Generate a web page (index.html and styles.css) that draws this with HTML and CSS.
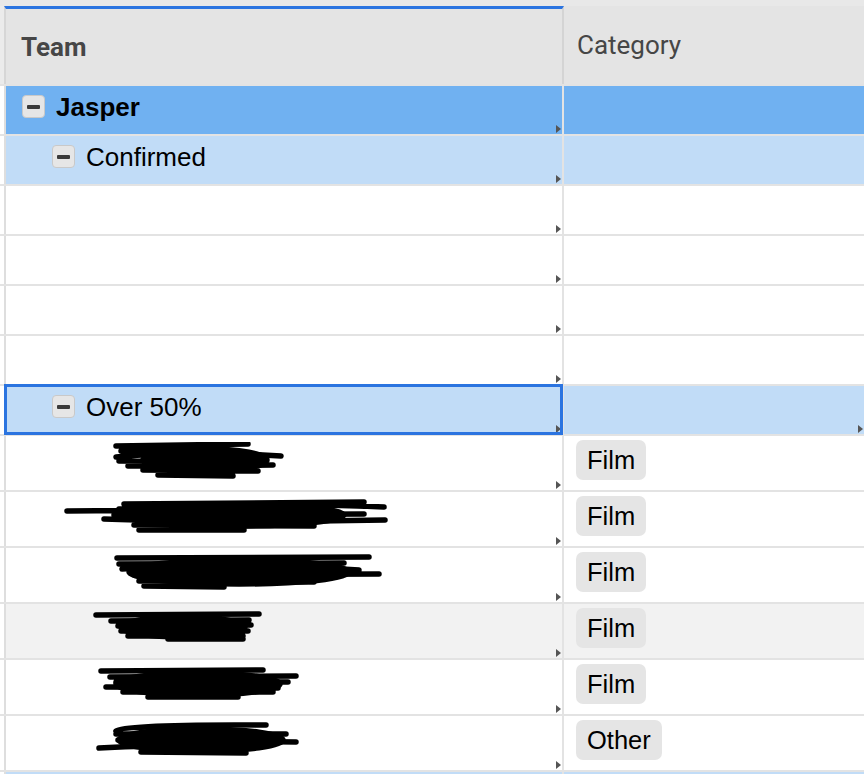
FILE: index.html
```html
<!DOCTYPE html>
<html>
<head>
<meta charset="utf-8">
<link rel="stylesheet" href="styles.css">
</head>
<body>
<div class="table">
  <div class="topband"></div>
  <div class="row head">
    <div class="gut"></div>
    <div class="cell team sorted"><span class="htext bold">Team</span></div>
    <div class="cell cat"><span class="htext">Category</span></div>
  </div>

  <div class="row group g1">
    <div class="gut"></div>
    <div class="cell team tri"><span class="toggle"><i></i></span><span class="gname strong">Jasper</span></div>
    <div class="cell cat"></div>
  </div>
  <div class="row group g2">
    <div class="gut"></div>
    <div class="cell team tri lvl2"><span class="toggle"><i></i></span><span class="gname">Confirmed</span></div>
    <div class="cell cat"></div>
  </div>
  <div class="row group">
    <div class="gut"></div>
    <div class="cell team tri"></div>
    <div class="cell cat"></div>
  </div>
  <div class="row group">
    <div class="gut"></div>
    <div class="cell team tri"></div>
    <div class="cell cat"></div>
  </div>
  <div class="row group">
    <div class="gut"></div>
    <div class="cell team tri"></div>
    <div class="cell cat"></div>
  </div>
  <div class="row group">
    <div class="gut"></div>
    <div class="cell team tri"></div>
    <div class="cell cat"></div>
  </div>
  <div class="row group g2">
    <div class="gut"></div>
    <div class="cell team tri lvl2 selected"><span class="toggle"><i></i></span><span class="gname">Over 50%</span></div>
    <div class="cell cat tri"></div>
  </div>

  <div class="row data">
    <div class="gut"></div>
    <div class="cell team tri">
      <svg class="scr s1" width="172" height="38" viewBox="0 0 172 38"><ellipse cx="92" cy="18" rx="62" ry="11"/><path d="M3 4 L135 2 M8 9 L110 8 M3 15 Q80 8 168 14 M6 19 L150 20 M15 24 L160 23 M30 28 L145 29 M45 33 L120 34"/></svg>
    </div>
    <div class="cell cat"><span class="chip">Film</span></div>
  </div>
  <div class="row data">
    <div class="gut"></div>
    <div class="cell team tri">
      <svg class="scr s2" width="324" height="34" viewBox="0 0 324 34"><ellipse cx="170" cy="16" rx="110" ry="11"/><path d="M3 12 L120 11 M60 5 L300 3 M55 10 Q200 2 320 8 M50 16 L300 15 M40 20 Q150 24 321 21 M70 26 L250 27 M75 31 L180 31"/></svg>
    </div>
    <div class="cell cat"><span class="chip">Film</span></div>
  </div>
  <div class="row data">
    <div class="gut"></div>
    <div class="cell team tri">
      <svg class="scr s3" width="268" height="37" viewBox="0 0 268 37"><ellipse cx="125" cy="18" rx="110" ry="12"/><path d="M3 4 L255 3 M5 10 L230 9 M8 15 Q120 8 245 16 M20 21 L265 20 M25 27 L200 28 M30 32 L110 33"/></svg>
    </div>
    <div class="cell cat"><span class="chip">Film</span></div>
  </div>
  <div class="row data hover">
    <div class="gut"></div>
    <div class="cell team tri">
      <svg class="scr s4" width="170" height="31" viewBox="0 0 170 31"><ellipse cx="90" cy="16" rx="62" ry="10"/><path d="M3 4 L166 3 M18 10 L156 9 M25 15 L158 14 M28 20 L155 20 M35 25 L150 25 M75 28 L150 28"/></svg>
    </div>
    <div class="cell cat"><span class="chip">Film</span></div>
  </div>
  <div class="row data">
    <div class="gut"></div>
    <div class="cell team tri">
      <svg class="scr s5" width="203" height="34" viewBox="0 0 203 34"><ellipse cx="100" cy="17" rx="82" ry="11"/><path d="M3 4 L165 3 M12 10 L198 9 M18 15 L190 15 M8 20 L180 21 M25 25 L175 25 M50 30 L140 30"/></svg>
    </div>
    <div class="cell cat"><span class="chip">Film</span></div>
  </div>
  <div class="row data">
    <div class="gut"></div>
    <div class="cell team tri">
      <svg class="scr s6" width="205" height="35" viewBox="0 0 205 35"><ellipse cx="105" cy="18" rx="82" ry="11"/><path d="M20 9 Q28 2 170 3 M20 12 L190 12 M22 18 L200 20 M3 26 Q80 22 170 24 M45 30 L150 31"/></svg>
    </div>
    <div class="cell cat"><span class="chip">Other</span></div>
  </div>
  <div class="row tail g2">
    <div class="gut"></div>
    <div class="cell team"></div>
    <div class="cell cat"></div>
  </div>
</div>
</body>
</html>
```

FILE: styles.css
```css
html, body {
  margin: 0;
  padding: 0;
  background: #ffffff;
  overflow: hidden;
}

body {
  width: 864px;
  height: 774px;
  font-family: "Liberation Sans", Arial, sans-serif;
  color: #000;
}

.table {
  display: flex;
  flex-direction: column;
  width: 864px;
}

.topband {
  height: 6px;
  background: #e8e8e8;
}

.row {
  display: grid;
  grid-template-columns: 4px 560px 300px;
  border-bottom: 2px solid #e3e3e3;
  flex: none;
}

.gut {
  background: #ffffff;
}

.cell {
  position: relative;
  display: flex;
  align-items: center;
  box-sizing: border-box;
}

.team {
  border-left: 2px solid #dedede;
  border-right: 2px solid #e3e3e3;
}

/* header */
.head {
  height: 78px;
  background: #e4e4e4;
}
.head .gut {
  background: #ebebeb;
}
.head .team {
  border-left-color: #d6d6d6;
  border-right-color: #d4d4d4;
  padding-left: 15px;
}
.head .cat {
  padding-left: 13px;
}
.sorted {
  border-top: 3px solid #2b74e0;
}
.htext {
  font-family: Roboto, "Liberation Sans", sans-serif;
  font-size: 26px;
  color: #464646;
}
.htext.bold {
  font-weight: 700;
}

/* group rows */
.group {
  height: 48px;
}
.group .cell {
  padding-bottom: 7px;
}
.group .team {
  padding-left: 16px;
}
.group .team.lvl2 {
  padding-left: 46px;
}
.g1 .cell {
  background: #70b1f1;
}
.g2 .cell {
  background: #c1dcf7;
}

.toggle {
  width: 23px;
  height: 23px;
  box-sizing: border-box;
  border: 1px solid #c9c9c9;
  border-radius: 4px;
  background: #e6e6e6;
  display: flex;
  align-items: center;
  justify-content: center;
  flex: none;
}
.toggle i {
  display: block;
  width: 13px;
  height: 4px;
  border-radius: 1px;
  background: #3a3a3a;
}

.gname {
  margin-left: 11px;
  font-size: 26px;
  line-height: 30px;
}
.gname.strong {
  font-weight: 700;
}

/* small expander triangles */
.tri::after {
  content: "";
  position: absolute;
  right: 1px;
  bottom: 1px;
  width: 0;
  height: 0;
  border-left: 5px solid #555555;
  border-top: 4px solid transparent;
  border-bottom: 4px solid transparent;
}

/* selection outline */
.selected::before {
  content: "";
  position: absolute;
  left: -2px;
  top: -2px;
  right: -1px;
  bottom: -1px;
  border: 3px solid #2b74e0;
  z-index: 2;
  pointer-events: none;
}

/* data rows */
.data {
  height: 54px;
}
.data .cell {
  align-items: flex-start;
}
.data .cat {
  padding: 4px 0 0 12px;
}
.hover .cell {
  background: #f2f2f2;
}

.tail {
  height: 2px;
  border-bottom: 0;
}

.chip {
  display: inline-block;
  height: 40px;
  line-height: 40px;
  padding: 0 11px;
  border-radius: 7px;
  background: #e5e5e5;
  font-size: 25.5px;
  color: #000;
}

.scr {
  display: block;
  flex: none;
  fill: #000;
  stroke: #000;
  stroke-width: 5.5;
  stroke-linecap: round;
}
.s1 { margin: 6px 0 0 107px; }
.s2 { margin: 7px 0 0 58px; }
.s3 { margin: 6px 0 0 108px; }
.s4 { margin: 7px 0 0 87px; }
.s5 { margin: 7px 0 0 92px; }
.s6 { margin: 6px 0 0 90px; }
```
